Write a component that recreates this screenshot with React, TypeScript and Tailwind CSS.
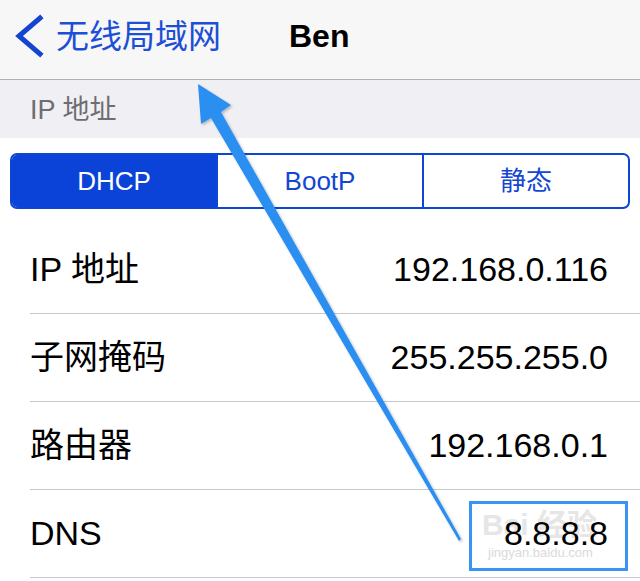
import React from "react";

const CJK = "font-['Liberation_Sans','Noto_Sans_CJK_SC',sans-serif]";

type Row = { label: string; value: string };

const rows: Row[] = [
  { label: "IP 地址", value: "192.168.0.116" },
  { label: "子网掩码", value: "255.255.255.0" },
  { label: "路由器", value: "192.168.0.1" },
  { label: "DNS", value: "8.8.8.8" },
];

const segments = ["DHCP", "BootP", "静态"];

const App: React.FC = () => {
  return (
    <div className={`relative w-[640px] h-[581px] overflow-hidden bg-white ${CJK}`}>
      {/* Navigation bar */}
      <div className="flex items-center h-[80px] pb-[7px] bg-[#f7f7f8] border-b border-[#b2b2b2]">
        <svg width="56" height="72" viewBox="0 0 56 72" className="shrink-0">
          <polyline
            points="40,18 19,36 40,54"
            fill="none"
            stroke="#1444d2"
            strokeWidth="5"
            strokeLinecap="square"
          />
        </svg>
        <span className="text-[33px] leading-none text-[#1d4fd4]">无线局域网</span>
        <span className="ml-[68px] text-[32px] leading-none font-bold text-black">Ben</span>
      </div>

      {/* Section header */}
      <div className="flex items-center h-[58px] pl-[30px] pt-[2px] bg-[#efeff4] text-[27px] text-[#6d6d72]">
        IP 地址
      </div>

      {/* Segmented control */}
      <div className="px-[10px] pt-[15px] pb-[17px]">
        <div className="flex h-[56px] rounded-[7px] border-2 border-[#0d45d6] overflow-hidden">
          {segments.map((s, i) => (
            <div
              key={s}
              className={`flex flex-1 items-center justify-center text-[26px] ${
                i === 0 ? "bg-[#0b43d8] text-white" : "text-[#1346d2]"
              } ${i > 0 ? "border-l-2 border-[#0d45d6]" : ""}`}
            >
              {s}
            </div>
          ))}
        </div>
      </div>

      {/* Settings rows */}
      <div className="flex flex-col">
        {rows.map((r) => (
          <div key={r.label} className="relative pl-[30px]">
            <div className="flex items-center justify-between h-[88px] pr-[32px] border-b border-[#c8c7cc] text-[34px] text-black">
              <span>{r.label}</span>
              <span className="relative">
                {r.label === "DNS" && (
                  <span className="absolute left-[-22px] top-[2px] flex flex-col items-start text-[#e6e6e6] leading-none pointer-events-none whitespace-nowrap">
                    <span className="text-[30px] font-bold">Bai 经验</span>
                    <span className="mt-[6px] ml-[6px] text-[13px] text-[#dadada]">jingyan.baidu.com</span>
                  </span>
                )}
                <span className="relative">{r.value}</span>
              </span>
            </div>
            {r.label === "DNS" && (
              <div className="absolute left-[469px] top-[11px] w-[159px] h-[70px] border-[3px] border-[#3a93ef]" />
            )}
          </div>
        ))}
      </div>

      {/* Annotation arrow */}
      <svg
        className="absolute inset-0 pointer-events-none"
        width="640"
        height="581"
        viewBox="0 0 640 581"
      >
        <defs>
          <filter id="arrowShadow" x="-10%" y="-10%" width="120%" height="120%">
            <feDropShadow dx="1.5" dy="1.5" stdDeviation="1.2" floodColor="#000" floodOpacity="0.25" />
          </filter>
        </defs>
        <polygon
          points="198,84 231,105 221,112 461,539 459,541 211,118 201,124"
          fill="#2b8ff0"
          filter="url(#arrowShadow)"
        />
      </svg>
    </div>
  );
};

export default App;
